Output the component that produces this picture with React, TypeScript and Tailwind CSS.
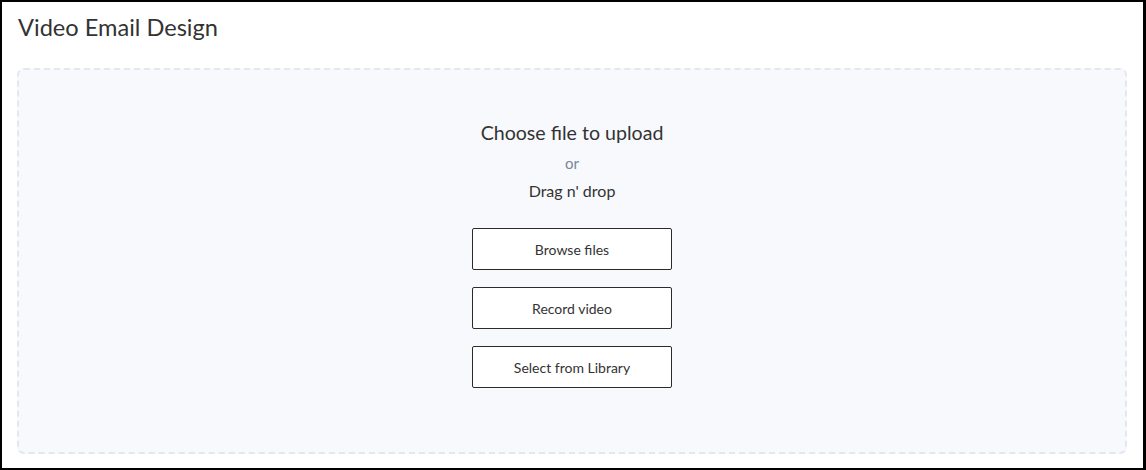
import React from "react";

export default function App() {
  const buttons = ["Browse files", "Record video", "Select from Library"];
  return (
    <div
      className="w-[1146px] h-[470px] border-2 border-r-[3px] border-black bg-white flex flex-col"
      style={{ fontFamily: "Lato, 'Open Sans', sans-serif" }}
    >
      <div className="pl-[16px] pt-[11px] h-[66px]">
        <h1 className="text-[23.6px] leading-[28px] text-[#333]">Video Email Design</h1>
      </div>
      <div className="ml-[15px] mr-[16px] mb-[14px] flex-1 rounded-[7px] border-2 border-dashed border-[#e3e7ef] bg-[#f8f9fc] flex flex-col items-center pt-[50px]">
        <div className="text-[19.6px] leading-[26px] text-[#333]">Choose file to upload</div>
        <div className="text-[15px] leading-[20px] text-[#7a8595] mt-[7px]">or</div>
        <div className="text-[16px] leading-[20px] text-[#333] mt-[8px]">Drag n' drop</div>
        <div className="flex flex-col gap-[17px] mt-[27px]">
          {buttons.map((b) => (
            <button
              key={b}
              className="w-[200px] h-[42px] border border-[#2b2b2b] rounded-[2px] bg-white text-[14px] text-[#333]"
            >
              {b}
            </button>
          ))}
        </div>
      </div>
    </div>
  );
}
